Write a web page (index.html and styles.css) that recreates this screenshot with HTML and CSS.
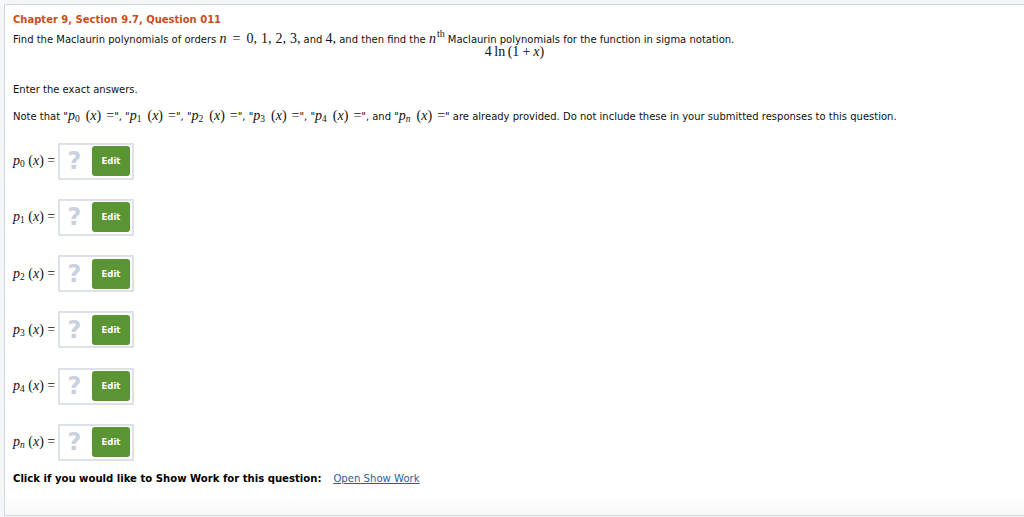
FILE: index.html
```html
<!DOCTYPE html>
<html>
<head>
<meta charset="utf-8">
<link rel="stylesheet" href="styles.css">
</head>
<body>
<div class="page">
  <div class="card">
    <div class="title">Chapter 9, Section 9.7, Question 011</div>
    <div class="intro">Find the Maclaurin polynomials of orders <span class="m"><i>n</i><span class="eq">=</span>0,<span class="th"></span>1,<span class="th"></span>2,<span class="th"></span>3,</span> and <span class="m">4,</span> and then find the <span class="m"><i>n</i><sup>th</sup></span> Maclaurin polynomials for the function in sigma notation.</div>
    <div class="formula m">4<span class="th"></span>ln<span class="th"></span>(1<span class="op">+</span><i>x</i>)</div>
    <p class="txt enter">Enter the exact answers.</p>
    <p class="txt note">Note that "<span class="m"><i>p</i><sub>0</sub><span class="sp"></span>(<i>x</i>)<span class="eqe">=</span></span>", "<span class="m"><i>p</i><sub>1</sub><span class="sp"></span>(<i>x</i>)<span class="eqe">=</span></span>", "<span class="m"><i>p</i><sub>2</sub><span class="sp"></span>(<i>x</i>)<span class="eqe">=</span></span>", "<span class="m"><i>p</i><sub>3</sub><span class="sp"></span>(<i>x</i>)<span class="eqe">=</span></span>", "<span class="m"><i>p</i><sub>4</sub><span class="sp"></span>(<i>x</i>)<span class="eqe">=</span></span>", and "<span class="m"><i>p</i><sub><i>n</i></sub><span class="sp"></span>(<i>x</i>)<span class="eqe">=</span></span>" are already provided. Do not include these in your submitted responses to this question.</p>
    <div class="answers">
      <div class="row"><span class="lbl m"><i>p</i><sub>0</sub> (<i>x</i>) =</span><div class="box"><span class="q">?</span><button class="edit">Edit</button></div></div>
      <div class="row"><span class="lbl m"><i>p</i><sub>1</sub> (<i>x</i>) =</span><div class="box"><span class="q">?</span><button class="edit">Edit</button></div></div>
      <div class="row"><span class="lbl m"><i>p</i><sub>2</sub> (<i>x</i>) =</span><div class="box"><span class="q">?</span><button class="edit">Edit</button></div></div>
      <div class="row"><span class="lbl m"><i>p</i><sub>3</sub> (<i>x</i>) =</span><div class="box"><span class="q">?</span><button class="edit">Edit</button></div></div>
      <div class="row"><span class="lbl m"><i>p</i><sub>4</sub> (<i>x</i>) =</span><div class="box"><span class="q">?</span><button class="edit">Edit</button></div></div>
      <div class="row"><span class="lbl m"><i>p</i><sub><i>n</i></sub> (<i>x</i>) =</span><div class="box"><span class="q">?</span><button class="edit">Edit</button></div></div>
    </div>
    <div class="showwork"><b>Click if you would like to Show Work for this question:</b><a href="#" class="link">Open Show Work</a></div>
  </div>
</div>
</body>
</html>
```

FILE: styles.css
```css
html, body {
  margin: 0;
  padding: 0;
  overflow: hidden;
}
body {
  background: #f5f6f9;
  font-family: "DejaVu Sans", Verdana, sans-serif;
  font-size: 10px;
  color: #111;
}
.page {
  padding: 4px 0 0 4px;
}
.card {
  background: linear-gradient(to bottom, #ffffff 0, #ffffff 488px, #f7f7f8 511px);
  border: 1px solid #d3d9e4;
  border-right: none;
  padding: 0 8px 0 8px;
  box-sizing: border-box;
  height: 512px;
}
.title {
  color: #c84f1c;
  font-weight: bold;
  font-size: 10px;
  margin-top: 8px;
  line-height: 14px;
}
.intro {
  margin-top: 5px;
  line-height: 13px;
}
.m {
  font-family: "Liberation Serif", "Times New Roman", serif;
  font-size: 14px;
}
.eq {
  display: inline-block;
  margin: 0 6px;
}
.eqe {
  display: inline-block;
  margin-left: 5px;
}
.sp {
  display: inline-block;
  width: 6px;
}
.op {
  display: inline-block;
  margin: 0 3px;
}
.th {
  display: inline-block;
  width: 2.5px;
}
.intro .th {
  width: 4px;
}
.m sup {
  font-size: 10px;
  vertical-align: 6px;
  line-height: 0;
  margin-left: 1px;
}
.m sub {
  font-size: 9.5px;
  vertical-align: -2px;
  line-height: 0;
}
.formula {
  text-align: center;
  line-height: 14px;
  margin-top: -1px;
  font-size: 14px;
}
.txt {
  margin: 0;
}
.enter {
  margin-top: 24px;
  line-height: 14px;
}
.note {
  margin-top: 12px;
  line-height: 14px;
}
.answers {
  margin-top: 19px;
  display: flex;
  flex-direction: column;
  gap: 20.3px;
}
.row {
  display: flex;
  align-items: center;
  height: 36px;
}
.lbl {
  width: 45px;
  white-space: nowrap;
  font-size: 14px;
}
.box {
  width: 76px;
  height: 37px;
  box-sizing: border-box;
  border: 2px solid #dde2ea;
  display: flex;
  align-items: center;
  padding-left: 6px;
  gap: 9px;
}
.q {
  color: #c9d1dc;
  font-family: "DejaVu Sans", sans-serif;
  font-weight: bold;
  font-size: 24px;
  width: 17px;
  text-align: center;
  line-height: 1;
}
.edit {
  background: #5a9433;
  color: #fff;
  border: none;
  border-radius: 3px;
  width: 38px;
  height: 30px;
  font-family: "DejaVu Sans", sans-serif;
  font-weight: bold;
  font-size: 8.5px;
  padding: 0;
}
.showwork {
  margin-top: 12px;
  line-height: 14px;
  font-size: 10.1px;
}
.showwork b {
  color: #000;
}
.link {
  margin-left: 12px;
  color: #2c5d98;
  text-decoration: underline;
}
```
